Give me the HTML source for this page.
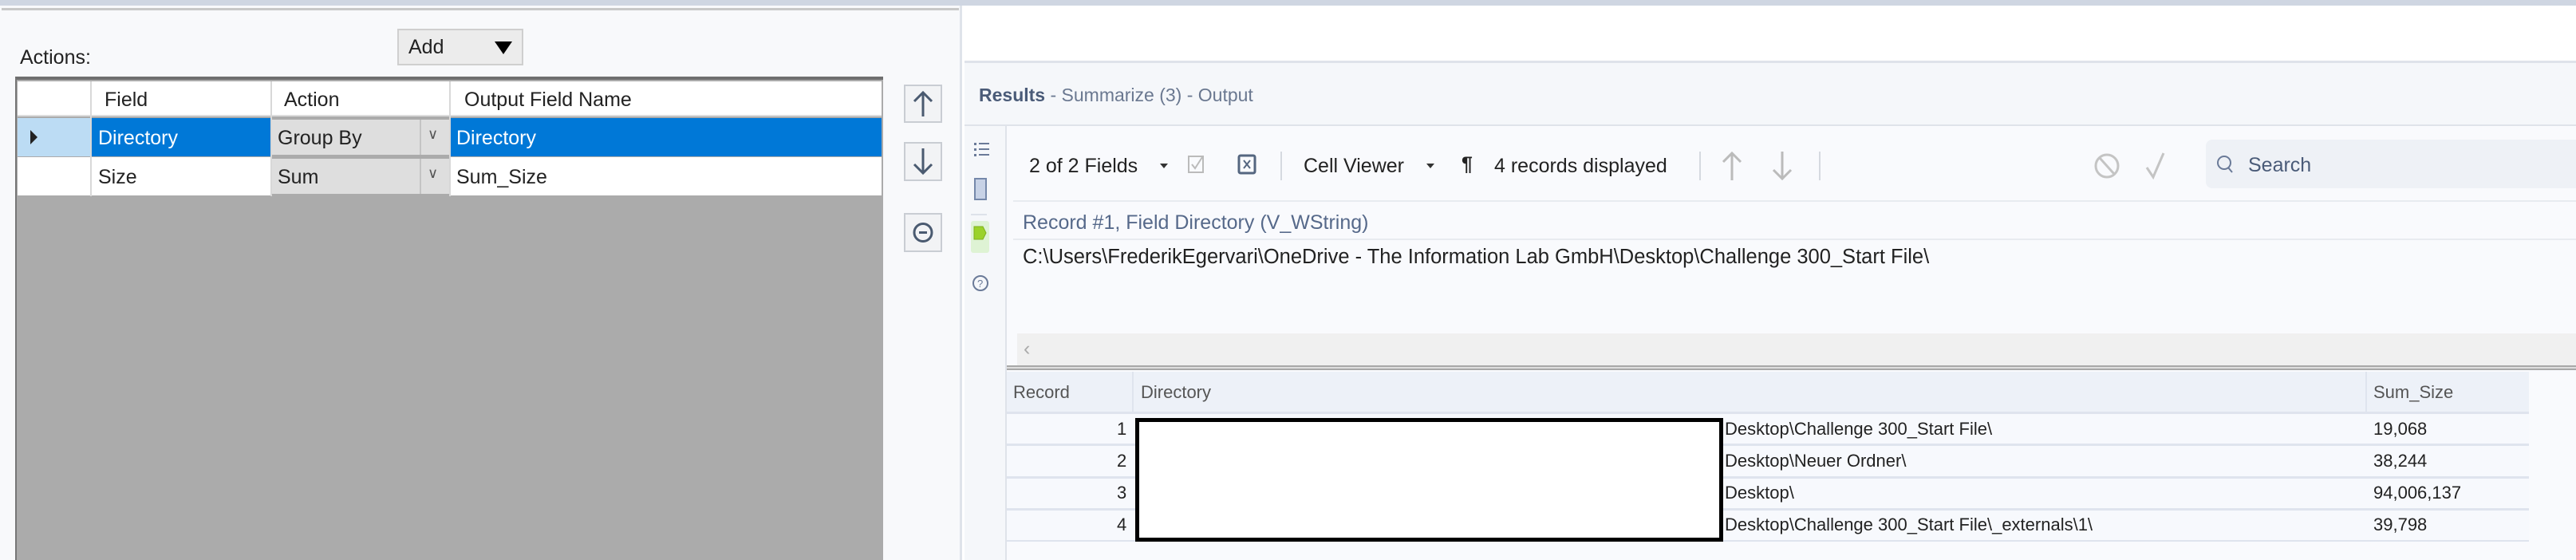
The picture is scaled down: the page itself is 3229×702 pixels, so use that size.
<!DOCTYPE html>
<html><head><meta charset="utf-8"><style>
*{margin:0;padding:0;box-sizing:border-box}
body{width:3229px;height:702px;overflow:hidden;background:#fff;font-family:"Liberation Sans",sans-serif;font-size:25px;color:#222;position:relative}
.a{position:absolute}
.t{position:absolute;white-space:nowrap;line-height:1}
</style></head><body>
<div class="a" style="left:0;top:0;width:3229px;height:7px;background:#cfd6e2"></div>
<div class="a" style="left:0;top:7px;width:1206px;height:695px;background:#f8f9fb;border-right:3px solid #dfe3ea"></div>
<div class="a" style="left:2px;top:10px;width:1200px;height:3px;background:#c8c8c8"></div>
<div class="t" style="left:25px;top:60px">Actions:</div>
<div class="a" style="left:498px;top:36px;width:158px;height:46px;background:#ececec;border:2px solid #cfcfcf"></div>
<div class="t" style="left:512px;top:47px">Add</div>
<div class="a" style="left:620px;top:52px;width:0;height:0;border-left:11px solid transparent;border-right:11px solid transparent;border-top:16px solid #000"></div>
<div class="a" style="left:19px;top:96px;width:1088px;height:606px;background:#ababab;border-top:4px solid #6f6f6f;border-left:2px solid #777"></div>
<div class="a" style="left:22px;top:102px;width:1083px;height:44px;background:#fff;border-bottom:2px solid #ddd"></div>
<div class="a" style="left:113px;top:102px;width:2px;height:144px;background:#d8d8d8"></div>
<div class="a" style="left:339px;top:102px;width:2px;height:144px;background:#d8d8d8"></div>
<div class="a" style="left:563px;top:102px;width:2px;height:144px;background:#d8d8d8"></div>
<div class="t" style="left:131px;top:113px">Field</div>
<div class="t" style="left:356px;top:113px">Action</div>
<div class="t" style="left:582px;top:113px">Output Field Name</div>
<div class="a" style="left:22px;top:148px;width:91px;height:48px;background:#bcdcf4"></div>
<div class="a" style="left:38px;top:163px;width:0;height:0;border-top:9px solid transparent;border-bottom:9px solid transparent;border-left:9px solid #222"></div>
<div class="a" style="left:115px;top:148px;width:224px;height:48px;background:#0078d7"></div>
<div class="a" style="left:341px;top:150px;width:222px;height:44px;background:#dedede"></div>
<div class="a" style="left:526px;top:150px;width:2px;height:44px;background:#c4c4c4"></div>
<div class="a" style="left:565px;top:148px;width:540px;height:48px;background:#0078d7"></div>
<div class="t" style="left:123px;top:161px;color:#fff">Directory</div>
<div class="t" style="left:348px;top:161px">Group By</div>
<div class="t" style="left:536px;top:159px;font-size:18px;color:#555">&#x2228;</div>
<div class="t" style="left:572px;top:161px;color:#fff">Directory</div>
<div class="a" style="left:22px;top:197px;width:91px;height:48px;background:#fff"></div>
<div class="a" style="left:115px;top:197px;width:224px;height:48px;background:#fff"></div>
<div class="a" style="left:341px;top:199px;width:222px;height:44px;background:#dedede"></div>
<div class="a" style="left:526px;top:199px;width:2px;height:44px;background:#c4c4c4"></div>
<div class="a" style="left:565px;top:197px;width:540px;height:48px;background:#fff"></div>
<div class="t" style="left:123px;top:210px">Size</div>
<div class="t" style="left:348px;top:210px">Sum</div>
<div class="t" style="left:536px;top:208px;font-size:18px;color:#555">&#x2228;</div>
<div class="t" style="left:572px;top:210px">Sum_Size</div>
<div class="a" style="left:1133px;top:106px;width:48px;height:48px;background:#f2f3f5;border:2px solid #c9cdd3"></div>
<svg class="a" style="left:1133px;top:106px" width="48" height="48"><path d="M24 40V10M13 21L24 10L35 21" stroke="#4a5a70" stroke-width="3" fill="none"/></svg>
<div class="a" style="left:1133px;top:178px;width:48px;height:49px;background:#f2f3f5;border:2px solid #c9cdd3"></div>
<svg class="a" style="left:1133px;top:178px" width="48" height="49"><path d="M24 8V39M13 28L24 39L35 28" stroke="#4a5a70" stroke-width="3" fill="none"/></svg>
<div class="a" style="left:1133px;top:267px;width:48px;height:49px;background:#f2f3f5;border:2px solid #c9cdd3"></div>
<svg class="a" style="left:1133px;top:267px" width="48" height="49"><circle cx="24" cy="24.5" r="11" stroke="#4a5a70" stroke-width="3" fill="none"/><path d="M19 24.5H29" stroke="#4a5a70" stroke-width="3"/></svg>
<div class="a" style="left:1209px;top:7px;width:2020px;height:70px;background:#fff"></div>
<div class="a" style="left:1209px;top:76px;width:2020px;height:3px;background:#dfe3ea"></div>
<div class="a" style="left:1209px;top:79px;width:2020px;height:623px;background:#f5f7fa"></div>
<div class="t" style="left:1227px;top:108px;font-size:23px;color:#4a5b78"><b style="font-weight:bold">Results</b><span style="color:#6a7890"> - Summarize (3) - Output</span></div>
<div class="a" style="left:1209px;top:156px;width:2020px;height:2px;background:#dfe3ea"></div>
<div class="a" style="left:1260px;top:158px;width:2px;height:544px;background:#dfe3ea"></div>
<div class="a" style="left:1262px;top:158px;width:1967px;height:544px;background:#f9fafd"></div>
<svg class="a" style="left:1212px;top:175px" width="44" height="200">
<g fill="#6a7a98"><rect x="9" y="4" width="3" height="3"/><rect x="15" y="4" width="13" height="2"/><rect x="9" y="11" width="3" height="3"/><rect x="15" y="11" width="13" height="2"/><rect x="9" y="18" width="3" height="3"/><rect x="15" y="18" width="13" height="2"/></g>
<rect x="10" y="49" width="14" height="26" fill="#c7d2e6" stroke="#7588aa" stroke-width="2"/>
<rect x="5" y="93" width="20" height="2" fill="#dde2ea"/>
<rect x="5" y="102" width="23" height="40" rx="3" fill="#def3d4"/>
<path d="M9 109H20L24 117L20 125H9Z" fill="#9ad22a" stroke="#7fb01c"/>
<circle cx="17" cy="180" r="9" fill="none" stroke="#6a7a98" stroke-width="2"/>
<text x="13" y="185" font-size="13" fill="#6a7a98" font-family="Liberation Sans">?</text>
</svg>
<div class="a" style="left:1270px;top:251px;width:1959px;height:2px;background:#e8ebf0"></div>
<div class="t" style="left:1290px;top:196px">2 of 2 Fields</div>
<div class="a" style="left:1454px;top:205px;border-left:5px solid transparent;border-right:5px solid transparent;border-top:6px solid #333"></div>
<svg class="a" style="left:1487px;top:190px" width="100" height="36"><rect x="3" y="6" width="18" height="20" fill="none" stroke="#bbb" stroke-width="2"/><path d="M7 16l4 5 9-14" stroke="#bbb" stroke-width="2" fill="none"/><rect x="66" y="5" width="20" height="22" rx="2" fill="none" stroke="#556680" stroke-width="3"/><path d="M72 11l8 10M80 11l-8 10" stroke="#556680" stroke-width="2"/></svg>
<div class="a" style="left:1605px;top:190px;width:2px;height:36px;background:#d5d9e0"></div>
<div class="t" style="left:1634px;top:196px">Cell Viewer</div>
<div class="a" style="left:1788px;top:205px;border-left:5px solid transparent;border-right:5px solid transparent;border-top:6px solid #333"></div>
<div class="t" style="left:1832px;top:194px;font-weight:bold">&#182;</div>
<div class="t" style="left:1873px;top:196px">4 records displayed</div>
<div class="a" style="left:2130px;top:190px;width:2px;height:36px;background:#d5d9e0"></div>
<svg class="a" style="left:2155px;top:188px" width="110" height="40"><path d="M16 38V4M5 15L16 4L27 15" stroke="#bbb" stroke-width="3" fill="none"/><path d="M79 2V36M68 25L79 36L90 25" stroke="#bbb" stroke-width="3" fill="none"/></svg>
<div class="a" style="left:2280px;top:190px;width:2px;height:36px;background:#d5d9e0"></div>
<svg class="a" style="left:2620px;top:188px" width="110" height="40"><circle cx="21" cy="20" r="14" fill="none" stroke="#c4c4c4" stroke-width="3"/><path d="M12 10L30 30" stroke="#c4c4c4" stroke-width="3"/><path d="M71 22L79 34L92 4" stroke="#c4c4c4" stroke-width="3" fill="none"/></svg>
<div class="a" style="left:2765px;top:175px;width:464px;height:61px;background:#eef1f6;border-radius:8px 0 0 8px"></div>
<svg class="a" style="left:2775px;top:192px" width="30" height="30"><circle cx="13" cy="12" r="8" fill="none" stroke="#6a7a98" stroke-width="2"/><path d="M18 18L23 24" stroke="#6a7a98" stroke-width="2"/></svg>
<div class="t" style="left:2818px;top:195px;color:#4a5b78">Search</div>
<div class="t" style="left:1282px;top:267px;color:#56698a">Record #1, Field Directory (V_WString)</div>
<div class="a" style="left:1270px;top:299px;width:1959px;height:2px;background:#e8ebf0"></div>
<div class="t" style="left:1282px;top:310px;font-size:25.5px">C:\Users\FrederikEgervari\OneDrive - The Information Lab GmbH\Desktop\Challenge 300_Start File\</div>
<div class="a" style="left:1275px;top:418px;width:1954px;height:40px;background:#f0f0f0"></div>
<div class="t" style="left:1283px;top:425px;color:#aaa">&#8249;</div>
<div class="a" style="left:1262px;top:458px;width:1967px;height:6px;border-top:2px solid #a8a8a8;border-bottom:2px solid #a8a8a8;background:#ddd"></div>
<div class="a" style="left:1262px;top:466px;width:1908px;height:50px;background:#edf1f8"></div>
<div class="a" style="left:1419px;top:466px;width:2px;height:212px;background:#dfe4ee"></div>
<div class="a" style="left:2965px;top:466px;width:2px;height:212px;background:#dfe4ee"></div>
<div class="t" style="left:1270px;top:481px;font-size:22px;color:#555">Record</div>
<div class="t" style="left:1430px;top:481px;font-size:22px;color:#555">Directory</div>
<div class="t" style="left:2975px;top:481px;font-size:22px;color:#555">Sum_Size</div>
<div class="a" style="left:1262px;top:516px;width:1908px;height:162px;background:#f7f9fd"></div>
<div class="a" style="left:1262px;top:556px;width:1908px;height:3px;background:#dfe4ee"></div>
<div class="a" style="left:1262px;top:597px;width:1908px;height:3px;background:#dfe4ee"></div>
<div class="a" style="left:1262px;top:637px;width:1908px;height:3px;background:#dfe4ee"></div>
<div class="a" style="left:1262px;top:677px;width:1908px;height:2px;background:#dfe4ee"></div>
<div class="a" style="left:1262px;top:516px;width:1908px;height:3px;background:#dfe4ee"></div>
<div class="t" style="left:1400px;top:527px;font-size:22px">1</div>
<div class="t" style="left:1400px;top:567px;font-size:22px">2</div>
<div class="t" style="left:1400px;top:607px;font-size:22px">3</div>
<div class="t" style="left:1400px;top:647px;font-size:22px">4</div>
<div class="t" style="left:2162px;top:527px;font-size:22px">Desktop\Challenge 300_Start File\</div>
<div class="t" style="left:2162px;top:567px;font-size:22px">Desktop\Neuer Ordner\</div>
<div class="t" style="left:2162px;top:607px;font-size:22px">Desktop\</div>
<div class="t" style="left:2162px;top:647px;font-size:22px">Desktop\Challenge 300_Start File\_externals\1\</div>
<div class="t" style="left:2975px;top:527px;font-size:22px">19,068</div>
<div class="t" style="left:2975px;top:567px;font-size:22px">38,244</div>
<div class="t" style="left:2975px;top:607px;font-size:22px">94,006,137</div>
<div class="t" style="left:2975px;top:647px;font-size:22px">39,798</div>
<div class="a" style="left:1423px;top:524px;width:737px;height:155px;background:#fff;border:5px solid #000"></div>
</body></html>
